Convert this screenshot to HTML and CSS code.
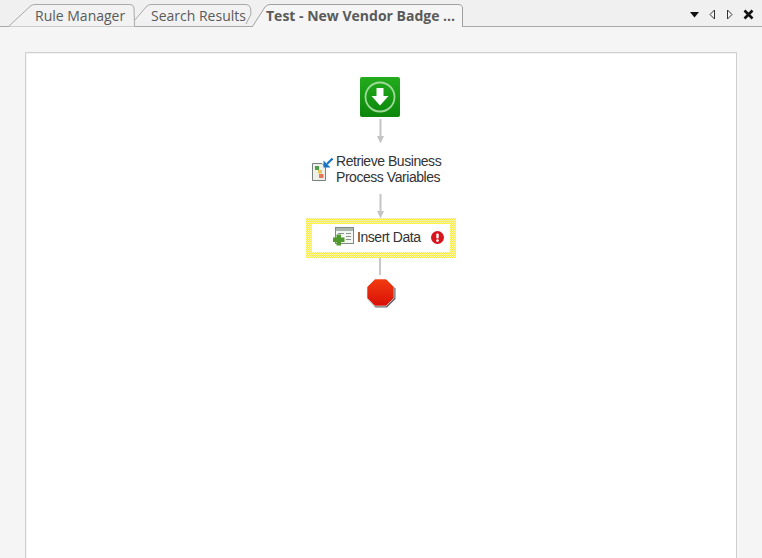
FILE: index.html
```html
<!DOCTYPE html>
<html lang="en">
<head>
  <meta charset="UTF-8" />
  <title>Test - New Vendor Badge</title>
  <link rel="stylesheet" href="styles.css">
</head>
<body>

  <div class="tabbar">
    <div class="tabs">
      <div class="tab tab-rule">
        <svg class="tab-shape" width="128" height="27" viewBox="0 0 128 27"><path d="M0.5 26.5 L22 6.5 Q24 4.5 27 4.5 H122 Q125.5 4.5 126 8 L126.5 26.5" fill="#f2f2f2" stroke="#a9a9a9"/></svg>
        <span class="tab-label">Rule Manager</span>
      </div>
      <div class="tab tab-search">
        <svg class="tab-shape" width="120" height="27" viewBox="0 0 120 27"><path d="M0.5 20.5 L12 7 Q14 4.5 17 4.5 H112 Q115.5 4.5 116.5 8 L117 14 L112 24" fill="#f2f2f2" stroke="#a9a9a9"/></svg>
        <span class="tab-label">Search Results</span>
      </div>
      <div class="tab tab-active">
        <svg class="tab-shape" width="212" height="28" viewBox="0 0 212 28"><path d="M0.5 27 L0.5 26.5 L13 7 Q15 4.5 18 4.5 H206 Q210.5 4.5 210.5 8 V27" fill="#f5f5f5" stroke="#a0a0a0"/></svg>
        <span class="tab-label">Test - New Vendor Badge ...</span>
      </div>
    </div>
    <div class="tab-tools">
      <svg width="9" height="6" viewBox="0 0 9 6"><path d="M0 0 H9 L4.5 5.5Z" fill="#111"/></svg>
      <svg width="7" height="11" viewBox="0 0 7 11"><path d="M5.5 1 L1 5.5 L5.5 10Z" fill="#f5f5f5" stroke="#333"/></svg>
      <svg width="7" height="11" viewBox="0 0 7 11"><path d="M1.5 1 L6 5.5 L1.5 10Z" fill="#f5f5f5" stroke="#333"/></svg>
      <svg width="11" height="11" viewBox="0 0 11 11"><path d="M1.5 1.5 L9.5 9.5 M9.5 1.5 L1.5 9.5" stroke="#111" stroke-width="2.6" fill="none"/></svg>
    </div>
  </div>

  <div class="content">
    <div class="canvas">

      <!-- start -->
      <svg class="node node-start" width="40" height="40" viewBox="0 0 40 40">
        <defs>
          <linearGradient id="greenfill" x1="0" y1="0" x2="0" y2="1">
            <stop offset="0" stop-color="#22ac1c"/>
            <stop offset="1" stop-color="#0c860c"/>
          </linearGradient>
        </defs>
        <rect x="0" y="0" width="40" height="40" rx="2" fill="url(#greenfill)"/>
        <circle cx="20" cy="20" r="14.5" fill="none" stroke="#9ed998" stroke-width="1.8"/>
        <path d="M16.5 11 H23.5 V19 H28.5 L20 28.5 L11.5 19 H16.5Z" fill="#fff"/>
      </svg>

      <svg class="node link-1" width="9" height="25" viewBox="0 0 9 25"><path d="M4.5 0 V20" stroke="#c4c4c4" stroke-width="2"/><path d="M1 17 H8 L4.5 24.5Z" fill="#c4c4c4"/></svg>

      <!-- retrieve variables -->
      <svg class="node icon-retrieve" width="22" height="24" viewBox="0 0 22 24">
        <path d="M1.5 6.5 H11 L14.5 10 V23.5 H1.5Z" fill="#f0f0ea" stroke="#77807a"/>
        <rect x="4" y="9" width="4" height="4" fill="#4fa04a"/>
        <rect x="7" y="13" width="4" height="3.5" fill="#e3c85a"/>
        <rect x="8" y="17" width="4.5" height="4" fill="#e4785a"/>
        <path d="M21.5 1.5 L16 7" stroke="#1474c4" stroke-width="2.2"/>
        <path d="M12.5 3.5 V10.5 H19.5Z" fill="#1474c4"/>
      </svg>
      <div class="node label label-retrieve">Retrieve Business<br>Process Variables</div>

      <svg class="node link-2" width="9" height="25" viewBox="0 0 9 25"><path d="M4.5 0 V20" stroke="#c4c4c4" stroke-width="2"/><path d="M1 17 H8 L4.5 24.5Z" fill="#c4c4c4"/></svg>

      <!-- insert data, selected -->
      <div class="node selected"></div>
      <svg class="node icon-insert" width="21" height="20" viewBox="0 0 21 20">
        <rect x="2.5" y="0.5" width="18" height="16" fill="#f4f6f4" stroke="#7f8a80"/>
        <rect x="3" y="1" width="17" height="3" fill="#a9b6ad"/>
        <path d="M13 6.5 H18 M13 9.5 H18 M13 12.5 H18 M5 6.5 H11" stroke="#8a948c" stroke-width="1.2"/>
        <path d="M3.5 7.5 H8 V10.5 H11.5 V15 H8 V18.5 H3.5 V15 H0 V10.5 H3.5Z" fill="#4f9a2e"/>
      </svg>
      <div class="node label label-insert">Insert Data</div>
      <svg class="node icon-error" width="13" height="13" viewBox="0 0 13 13">
        <circle cx="6.5" cy="6.5" r="6.5" fill="#d8141c"/>
        <rect x="5.3" y="2.4" width="2.4" height="5.2" rx="1" fill="#fff"/>
        <circle cx="6.5" cy="9.6" r="1.3" fill="#fff"/>
      </svg>

      <svg class="node link-3" width="2" height="17" viewBox="0 0 2 17"><path d="M1 0 V17" stroke="#c8c8c8" stroke-width="2"/></svg>

      <!-- end -->
      <svg class="node node-end" width="32" height="32" viewBox="0 0 32 32">
        <defs>
          <linearGradient id="redfill" x1="0" y1="0" x2="0" y2="1">
            <stop offset="0" stop-color="#f23c10"/>
            <stop offset="1" stop-color="#d80f08"/>
          </linearGradient>
        </defs>
        <path d="M9.5 2 H21 L29.5 10.5 V21 L21 29.5 H9.5 L1.5 21 V10.5Z" fill="#666"/>
        <path d="M9 1 H20 L28 9 V20 L20 28 H9 L1 20 V9Z" fill="url(#redfill)" stroke="#f4f4f4" stroke-width="0.6"/>
      </svg>

    </div>
  </div>

</body>
</html>
```

FILE: styles.css
```css
* {
  margin: 0;
  padding: 0;
  box-sizing: border-box;
}

body, html {
  height: 100%;
  overflow: hidden;
  background-color: #f5f5f5;
}

.tabbar {
  height: 27px;
  display: flex;
  justify-content: space-between;
  background-color: #f0f0f0;
  border-bottom: 1px solid #a9a9a9;
  font-family: 'Open Sans', sans-serif;
}

.tabs {
  display: flex;
  padding-left: 8px;
}

.tab {
  position: relative;
  height: 27px;
}

.tab-shape {
  position: absolute;
  left: 0;
  top: 0;
}

.tab-label {
  position: relative;
  display: block;
  font-size: 14px;
  line-height: 32px;
  color: #5a5a5a;
  white-space: nowrap;
}

.tab-rule {
  width: 126px;
  padding-left: 27px;
}

.tab-search {
  width: 118px;
  padding-left: 17px;
}

.tab-active {
  width: 212px;
  height: 28px;
  padding-left: 14px;
}

.tab-active .tab-label {
  font-weight: bold;
}

.tab-tools {
  display: flex;
  align-items: center;
  gap: 10px;
  padding: 3px 8px 0 0;
}

.content {
  height: calc(100% - 27px);
  padding: 25px 25px 0;
}

.canvas {
  position: relative;
  height: 100%;
  background-color: #fff;
  border: 1px solid #cfcfcf;
  border-bottom: none;
  box-shadow: inset 1px 1px 0 #f4f4f4;
}

.node {
  position: absolute;
}

.node-start {
  left: 334px;
  top: 24px;
}

.link-1 {
  left: 350px;
  top: 66px;
}

.icon-retrieve {
  left: 285px;
  top: 104px;
}

.label {
  font-family: 'Liberation Sans', Arial, sans-serif;
  font-size: 14px;
  letter-spacing: -0.45px;
  line-height: 16px;
  color: #333;
  white-space: nowrap;
}

.label-retrieve {
  left: 310px;
  top: 100px;
}

.link-2 {
  left: 350px;
  top: 141px;
}

/* dithered yellow frame */
.selected {
  left: 280px;
  top: 165px;
  width: 150px;
  height: 40px;
  border: 6px solid transparent;
  background:
    linear-gradient(#fff, #fff) padding-box,
    repeating-conic-gradient(#fbe93e 0 25%, #fef8b8 0 50%) border-box;
  background-size: auto, 2px 2px;
}

.icon-insert {
  left: 307px;
  top: 174px;
}

.label-insert {
  left: 331px;
  top: 176px;
}

.icon-error {
  left: 405px;
  top: 178px;
}

.link-3 {
  left: 353px;
  top: 205px;
}

.node-end {
  left: 340px;
  top: 225px;
}
```
